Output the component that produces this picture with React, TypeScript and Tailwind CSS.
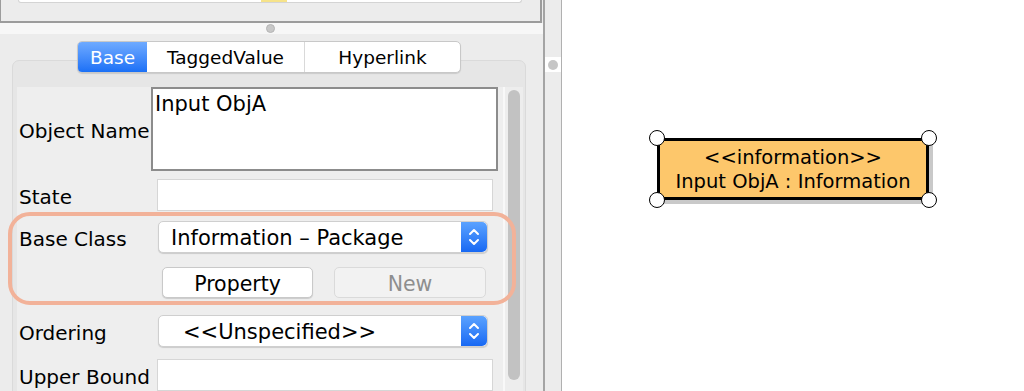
import React from "react";

function Stepper() {
  return (
    <div className="w-[26px] h-full rounded-r-[5px] bg-gradient-to-b from-[#5aa2ff] to-[#1768f3] flex items-center justify-center">
      <svg width="12" height="20" viewBox="0 0 12 20" fill="none" stroke="white" strokeWidth="2" strokeLinecap="round" strokeLinejoin="round">
        <path d="M2 7 L6 3 L10 7" />
        <path d="M2 13 L6 17 L10 13" />
      </svg>
    </div>
  );
}

function Select({ text, indent }: { text: string; indent: string }) {
  return (
    <div className="ml-[7px] w-[330px] h-[32px] flex rounded-[5px] bg-white border border-[#cfcfcf] shadow-[0_1px_1px_rgba(0,0,0,0.15)]">
      <div className={`flex-1 flex items-center pt-[3px] text-[21px] text-black ${indent}`}>{text}</div>
      <Stepper />
    </div>
  );
}

function Label({ children }: { children: React.ReactNode }) {
  return <div className="w-[134px] pl-[2px] pt-[3px] text-[20px] text-black leading-none whitespace-nowrap">{children}</div>;
}

export default function App() {
  return (
    <div className="w-[1024px] h-[391px] overflow-hidden flex bg-white font-['DejaVu_Sans',sans-serif]">
      {/* left column */}
      <div className="w-[543px] h-full flex flex-col bg-[#ececec] shrink-0">
        {/* top frame */}
        <div className="w-[542px] h-[23px] shrink-0 border-l border-r-2 border-b-2 border-[#9c9c9c] bg-[#ececec] relative">
          <div className="ml-[17px] w-[504px] h-[3px] bg-white border-b border-x border-[#d4d4d4] rounded-b-[3px] flex">
            <div className="ml-[242px] w-[26px] h-[2px] bg-[#f6e38a]" />
          </div>
        </div>
        {/* splitter strip */}
        <div className="h-[11px] shrink-0 bg-[#f7f7f7] flex justify-center items-center">
          <div className="w-[9px] h-[9px] rounded-full bg-[#c8c8c8] border border-[#b5b5b5] ml-[-2px]" />
        </div>
        {/* tab area */}
        <div className="flex-1 pl-[12px] pt-[7px] flex flex-col">
          <div className="w-[514px] flex justify-center relative z-10">
            <div className="flex h-[32px] rounded-[5px] border border-[#c8c8c8] bg-white shadow-[0_1px_1px_rgba(0,0,0,0.12)] overflow-hidden text-[18.5px] leading-none">
              <div className="w-[69px] pt-[2px] flex items-center justify-center text-white bg-gradient-to-b from-[#6eaaff] to-[#1a70f6]">Base</div>
              <div className="w-[158px] pt-[2px] flex items-center justify-center text-black border-r border-[#d9d9d9]">TaggedValue</div>
              <div className="w-[155px] pt-[2px] flex items-center justify-center text-black">Hyperlink</div>
            </div>
          </div>
          {/* panel */}
          <div className="mt-[-13px] w-[514px] flex-1 rounded-t-[7px] border border-[#dadada] bg-[#e6e6e6] pl-[4px] pt-[26px] flex relative">
            <div className="w-[486px] bg-[#eeeeee] flex flex-col">
              {/* Object Name */}
              <div className="h-[84px] flex items-center">
                <Label>Object Name</Label>
                <div className="w-[347px] h-full bg-white border-2 border-[#8c8c8c] pl-[2px] pt-[3px] text-[21px] leading-[24px] text-black">Input ObjA</div>
              </div>
              {/* State */}
              <div className="mt-[8px] h-[32px] flex items-center">
                <Label>State</Label>
                <div className="ml-[6px] w-[336px] h-full bg-white border border-[#d6d6d6]" />
              </div>
              {/* Base Class */}
              <div className="mt-[10px] h-[32px] flex items-center">
                <Label>Base Class</Label>
                <Select text="Information – Package" indent="pl-[12px]" />
              </div>
              {/* Buttons */}
              <div className="mt-[14px] h-[31px] flex items-center">
                <div className="w-[145px]" />
                <div className="w-[151px] h-full pt-[3px] rounded-[5px] bg-white border border-[#c9c9c9] shadow-[0_1px_1px_rgba(0,0,0,0.15)] flex items-center justify-center text-[20.5px] text-black">Property</div>
                <div className="ml-[21px] w-[152px] h-full pt-[3px] rounded-[5px] bg-[#f2f2f2] border border-[#dadada] flex items-center justify-center text-[20.5px] text-[#8e8e8e]">New</div>
              </div>
              {/* Ordering */}
              <div className="mt-[17px] h-[32px] flex items-center">
                <Label>Ordering</Label>
                <Select text="<<Unspecified>>" indent="pl-[24px]" />
              </div>
              {/* Upper Bound */}
              <div className="mt-[12px] h-[32px] flex items-center">
                <Label>Upper Bound</Label>
                <div className="ml-[6px] w-[336px] h-full bg-white border border-[#d6d6d6]" />
              </div>
            </div>
            {/* scrollbar */}
            <div className="w-[20px] bg-[#ededed] border-l-2 border-[#f8f8f8] flex justify-center pt-[3px]">
              <div className="w-[12px] h-[290px] rounded-full bg-[#c2c2c2]" />
            </div>
            {/* highlight annotation */}
            <div className="absolute left-[-5px] top-[151px] w-[508px] h-[93px] rounded-[22px] border-[4px] border-[#f2b299]" />
          </div>
        </div>
      </div>
      {/* divider */}
      <div className="w-[2px] h-full bg-[#a4a4a4] shrink-0" />
      <div className="w-[17px] h-full bg-[#ececec] border-r border-[#b0b0b0] shrink-0 pt-[57px]">
        <div className="h-[15px] bg-white flex items-center justify-center">
          <div className="w-[10px] h-[10px] rounded-full bg-[#c6c6c6]" />
        </div>
      </div>
      {/* canvas */}
      <div className="flex-1 h-full bg-white relative">
        <div className="absolute left-[95px] top-[138px] w-[272px] h-[62px]">
          <div className="absolute left-[4px] top-[4px] w-[272px] h-[62px] bg-[#c9c9c9]" />
          <div className="absolute inset-0 pt-[2px] bg-[#fdc76b] border-[3px] border-black flex flex-col items-center justify-center text-[19.5px] leading-[24px] text-black">
            <div>&lt;&lt;information&gt;&gt;</div>
            <div>Input ObjA : Information</div>
          </div>
          <div className="absolute left-[-8px] top-[-8px] w-[16px] h-[16px] rounded-full bg-white border-[1.5px] border-black" />
          <div className="absolute right-[-8px] top-[-8px] w-[16px] h-[16px] rounded-full bg-white border-[1.5px] border-black" />
          <div className="absolute left-[-8px] bottom-[-8px] w-[16px] h-[16px] rounded-full bg-white border-[1.5px] border-black" />
          <div className="absolute right-[-8px] bottom-[-8px] w-[16px] h-[16px] rounded-full bg-white border-[1.5px] border-black" />
        </div>
      </div>
    </div>
  );
}
